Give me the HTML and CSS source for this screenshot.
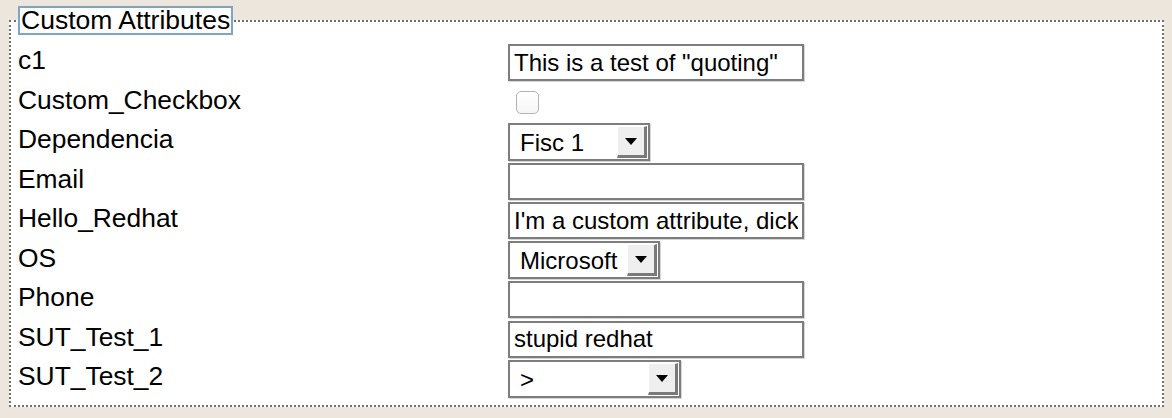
FILE: index.html
```html
<!DOCTYPE html>
<html lang="en">
<head>
<meta charset="utf-8">
<title>Custom Attributes</title>
<link rel="stylesheet" href="styles.css">
</head>
<body>
<fieldset class="attrs">
  <legend class="attrs-title">Custom Attributes</legend>
  <div class="grid">
    <label class="lbl">c1</label>
    <div class="ctl"><input class="txt" type="text" value='This is a test of "quoting"'></div>

    <label class="lbl">Custom_Checkbox</label>
    <div class="ctl"><input class="chk" type="checkbox"></div>

    <label class="lbl">Dependencia</label>
    <div class="ctl"><div class="sel sel-fisc"><span class="sel-val">Fisc 1</span><span class="sel-btn"><span class="arrow"></span></span></div></div>

    <label class="lbl">Email</label>
    <div class="ctl"><input class="txt" type="text" value=""></div>

    <label class="lbl">Hello_Redhat</label>
    <div class="ctl"><input class="txt" type="text" value="I'm a custom attribute, dick"></div>

    <label class="lbl">OS</label>
    <div class="ctl"><div class="sel sel-os"><span class="sel-val">Microsoft</span><span class="sel-btn"><span class="arrow"></span></span></div></div>

    <label class="lbl">Phone</label>
    <div class="ctl"><input class="txt" type="text" value=""></div>

    <label class="lbl">SUT_Test_1</label>
    <div class="ctl"><input class="txt" type="text" value="stupid redhat"></div>

    <label class="lbl">SUT_Test_2</label>
    <div class="ctl"><div class="sel sel-sut"><span class="sel-val">&gt;</span><span class="sel-btn"><span class="arrow"></span></span></div></div>
  </div>
</fieldset>
</body>
</html>
```

FILE: styles.css
```css
html, body {
  margin: 0;
  padding: 0;
  background: #ece6dd;
  font-family: "Liberation Sans", Arial, Helvetica, sans-serif;
  color: #000;
}

body {
  height: 418px;
  overflow: hidden;
}

.attrs {
  margin: 6px 8px 0 9px;
  padding: 8px 7px 6px 7px;
  border: 2px dotted #6f6f6f;
  background: #fff;
  min-width: 0;
}

.attrs-title {
  padding: 0 1px 0 1px;
  border: 2px solid #7ca5c8;
  background: #fff;
  font-size: 26.5px;
  line-height: 25px;
  margin-left: 0;
}

.grid {
  display: grid;
  grid-template-columns: 490px 1fr;
  grid-auto-rows: 39.5px;
  align-items: center;
}

.lbl {
  align-self: start;
  font-size: 26.4px;
  line-height: 34px;
  white-space: nowrap;
}

.ctl {
  display: flex;
  align-items: center;
}

.txt {
  box-sizing: border-box;
  width: 296px;
  height: 37px;
  margin: 0;
  padding: 0 4px;
  border: 2px solid #7d7d7d;
  box-shadow: 1px 1px 0 #d6d6d6;
  background: #fff;
  font-family: "Liberation Sans", Arial, Helvetica, sans-serif;
  font-size: 24px;
  color: #000;
  outline: none;
}

.chk {
  appearance: none;
  -webkit-appearance: none;
  box-sizing: border-box;
  width: 23px;
  height: 23px;
  margin: 0 0 0 8px;
  border: 1px solid #b3b3b3;
  border-radius: 5px;
  background: linear-gradient(#ffffff, #f6f6f6);
}

.sel {
  box-sizing: border-box;
  display: flex;
  height: 38px;
  padding: 1px;
  border: 2px solid #7d7d7d;
  box-shadow: 1px 1px 0 #d6d6d6;
  background: #fff;
}

.sel-fisc { width: 142px; }
.sel-os { width: 152px; }
.sel-sut { width: 173px; }

.sel-val {
  flex: 1;
  padding-left: 9px;
  font-size: 24px;
  line-height: 33px;
  white-space: nowrap;
  overflow: hidden;
}

.sel-btn {
  box-sizing: border-box;
  width: 30px;
  display: flex;
  align-items: center;
  justify-content: center;
  background: #efefef;
  border-top: 1px solid #ffffff;
  border-left: 1px solid #ffffff;
  border-right: 3px solid #7a7a7a;
  border-bottom: 3px solid #7a7a7a;
}

.arrow {
  width: 0;
  height: 0;
  margin-top: 1px;
  border-left: 6px solid transparent;
  border-right: 6px solid transparent;
  border-top: 7px solid #000;
}
```
